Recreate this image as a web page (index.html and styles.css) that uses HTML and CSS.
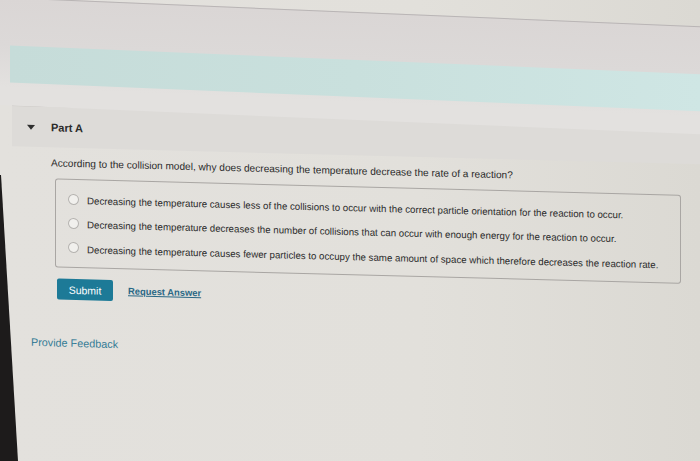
FILE: index.html
```html
<!DOCTYPE html>
<html lang="en">
<head>
<meta charset="utf-8">
<title>Part A</title>
<link rel="stylesheet" href="styles.css">
</head>
<body>
<div class="wedge"></div>
<div class="page">
  <div class="top">
    <div class="top-rule"></div>
    <div class="banner"></div>
  </div>
  <section class="part">
    <header class="part-head">
      <span class="caret"></span>
      <h2 class="part-title">Part A</h2>
    </header>
    <div class="part-body">
      <p class="question">According to the collision model, why does decreasing the temperature decrease the rate of a reaction?</p>
      <div class="choices">
        <label class="choice"><span class="radio"></span><span class="choice-text">Decreasing the temperature causes less of the collisions to occur with the correct particle orientation for the reaction to occur.</span></label>
        <label class="choice"><span class="radio"></span><span class="choice-text">Decreasing the temperature decreases the number of collisions that can occur with enough energy for the reaction to occur.</span></label>
        <label class="choice"><span class="radio"></span><span class="choice-text">Decreasing the temperature causes fewer particles to occupy the same amount of space which therefore decreases the reaction rate.</span></label>
      </div>
      <div class="actions">
        <button class="submit" type="button">Submit</button>
        <a class="request" href="#">Request Answer</a>
      </div>
    </div>
  </section>
  <a class="feedback" href="#">Provide Feedback</a>
</div>
</body>
</html>
```

FILE: styles.css
```css
html, body {
  margin: 0;
  padding: 0;
  height: 100%;
  overflow: hidden;
}

body {
  background: linear-gradient(90deg, #e3e1dd 0%, #e2e0db 60%, #dbd9d3 100%);
  font-family: "Liberation Sans", Arial, sans-serif;
  color: #2b2b2b;
}

.wedge {
  position: fixed;
  left: 0;
  top: 0;
  width: 20px;
  height: 461px;
  background: #1d1b1b;
  clip-path: polygon(0 175px, 1px 175px, 18px 461px, 0 461px);
  z-index: 2;
}

.page {
  transform: skewY(1.5deg);
  transform-origin: 0 0;
}

.top {
  margin-top: -3px;
  height: 108px;
  background: linear-gradient(180deg, #dad6d5 0px, #dcd9d8 48px, #e3e1df 90px, #e3e1df 108px);
  transform: skewY(0.9deg);
  transform-origin: 0 0;
}

.top-rule {
  height: 1px;
  background: #b9b5b5;
}

.banner {
  margin: 47px 0 0 10px;
  height: 37px;
  background: linear-gradient(90deg, #c6dcd9 0%, #c9e0dd 50%, #cfe6e4 100%);
}

.part {
  margin-left: 12px;
  border-top: 1px solid #c4c1be;
}

.part-head {
  display: flex;
  align-items: center;
  height: 40px;
  padding-left: 15px;
  background: #dddbd8;
}

.caret {
  width: 0;
  height: 0;
  border-left: 4px solid transparent;
  border-right: 4px solid transparent;
  border-top: 5px solid #2e2e2e;
  margin-right: 16px;
}

.part-title {
  margin: 0;
  font-size: 11px;
  font-weight: bold;
  line-height: 14px;
  color: #2a2a2a;
}

.part-body {
  padding-left: 39px;
}

.question {
  margin: 9px 0 0 0;
  font-size: 10.1px;
  line-height: 14px;
  color: #2b2b2b;
}

.choices {
  margin: 8px 0 0 4px;
  width: 626px;
  height: 89px;
  box-sizing: border-box;
  border: 1px solid #a9a6a3;
  border-radius: 3px;
  padding: 9px 0 0 12px;
  display: flex;
  flex-direction: column;
}

.choice {
  display: flex;
  align-items: center;
  height: 24.3px;
  gap: 8px;
}

.radio {
  flex: none;
  width: 11px;
  height: 11px;
  box-sizing: border-box;
  border-radius: 50%;
  border: 1px solid #b5b3b0;
  background: #f1f0ed;
  margin-bottom: 4px;
}

.choice-text {
  font-size: 9.7px;
  line-height: 12px;
  color: #2b2b2b;
  white-space: nowrap;
}

.actions {
  display: flex;
  align-items: center;
  margin: 11px 0 0 6px;
  gap: 15px;
}

.submit {
  width: 56px;
  height: 21px;
  border: none;
  border-radius: 2px;
  background: #1d7a97;
  color: #ffffff;
  font-family: "Liberation Sans", Arial, sans-serif;
  font-size: 10.5px;
  padding: 0;
}

.request {
  font-size: 9.4px;
  font-weight: bold;
  color: #2a6885;
  text-decoration: underline;
}

.feedback {
  display: block;
  margin: 36px 0 0 31px;
  font-size: 10.8px;
  line-height: 14px;
  color: #357c96;
  text-decoration: none;
}
```
